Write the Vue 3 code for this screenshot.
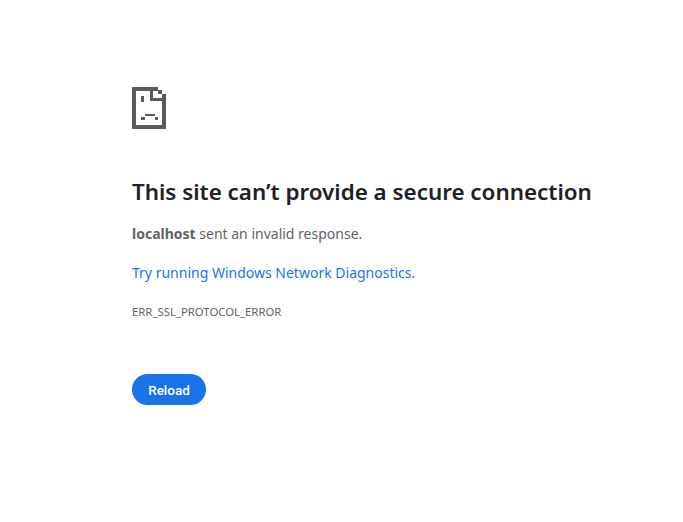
<template>
  <main class="page">
    <svg class="icon" width="34" height="42" viewBox="0 0 34 42" shape-rendering="crispEdges" aria-hidden="true">
      <g fill="#5b5b5b">
        <rect x="0" y="0" width="26" height="4" />
        <rect x="0" y="0" width="4" height="42" />
        <rect x="0" y="38" width="34" height="4" />
        <rect x="30" y="7" width="4" height="35" />
        <rect x="26" y="3" width="4" height="4" />
        <rect x="18" y="0" width="3" height="14" />
        <rect x="18" y="11" width="16" height="3" />
        <rect x="9" y="9" width="3" height="6" />
        <rect x="13" y="27" width="10" height="2" />
        <rect x="9" y="30" width="4" height="3" />
        <rect x="23" y="30" width="3" height="3" />
      </g>
    </svg>

    <h1>This site can’t provide a secure connection</h1>
    <p class="summary"><strong>localhost</strong> sent an invalid response.</p>
    <p class="suggestion"><a href="#">Try running Windows Network Diagnostics</a>.</p>
    <p class="code">ERR_SSL_PROTOCOL_ERROR</p>

    <button class="reload" type="button">Reload</button>
  </main>
</template>

<script setup>
</script>

<style>
html, body {
  background: #fff;
}
</style>

<style scoped>
.page {
  padding: 87px 0 0 132px;
  height: 522px;
  box-sizing: border-box;
  font-family: "Noto Sans", "Open Sans", sans-serif;
  color: #5f6368;
}

.icon {
  display: block;
  margin-bottom: 47px;
}

h1 {
  margin: 0 0 17px;
  font-size: 22.4px;
  line-height: 31px;
  font-weight: 600;
  color: #202124;
  white-space: nowrap;
}

p {
  margin: 0;
  font-size: 14px;
  line-height: 20px;
}

.summary strong {
  font-weight: 700;
}

.suggestion {
  margin-top: 19px;
}

.suggestion a {
  color: #1a73e8;
  text-decoration: none;
}

.code {
  margin-top: 19px;
  font-size: 11.35px;
}

.reload {
  display: block;
  margin-top: 52px;
  width: 74px;
  height: 31px;
  padding: 0;
  border: none;
  border-radius: 16px;
  background: #1a73e8;
  color: #fff;
  font-family: Roboto, sans-serif;
  font-size: 13.5px;
  font-weight: 500;
}
</style>
